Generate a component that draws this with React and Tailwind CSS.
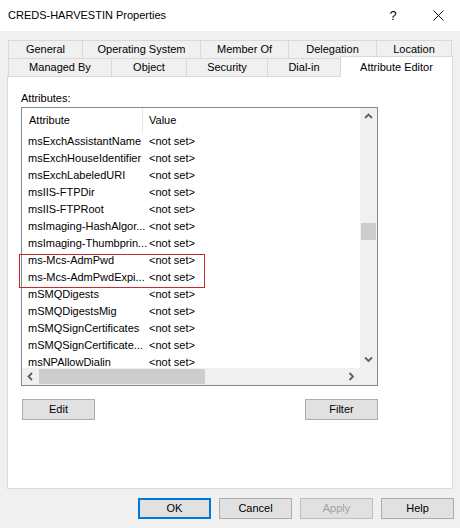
import React from 'react';

const rows = [
  'msExchAssistantName',
  'msExchHouseIdentifier',
  'msExchLabeledURI',
  'msIIS-FTPDir',
  'msIIS-FTPRoot',
  'msImaging-HashAlgor...',
  'msImaging-Thumbprin...',
  'ms-Mcs-AdmPwd',
  'ms-Mcs-AdmPwdExpi...',
  'mSMQDigests',
  'mSMQDigestsMig',
  'mSMQSignCertificates',
  'mSMQSignCertificate...',
  'msNPAllowDialin',
];

const row1 = [
  { label: 'General', w: 'w-[74px]' },
  { label: 'Operating System', w: 'w-[118px]' },
  { label: 'Member Of', w: 'w-[88px]' },
  { label: 'Delegation', w: 'w-[88px]' },
  { label: 'Location', w: 'w-[76px] border-r' },
];

const row2 = [
  { label: 'Managed By', w: 'w-[103px]' },
  { label: 'Object', w: 'w-[75px]' },
  { label: 'Security', w: 'w-[81px]' },
  { label: 'Dial-in', w: 'w-[73px]' },
];

const Chevron = ({ dir }) => {
  const paths = {
    up: 'M1 5 L4.5 1.5 L8 5',
    down: 'M1 1.5 L4.5 5 L8 1.5',
    left: 'M5 1 L1.5 4.5 L5 8',
    right: 'M1.5 1 L5 4.5 L1.5 8',
  };
  const vertical = dir === 'up' || dir === 'down';
  return (
    <svg width={vertical ? 9 : 7} height={vertical ? 7 : 9} viewBox={vertical ? '0 0 9 7' : '0 0 7 9'}>
      <path d={paths[dir]} fill="none" stroke="#606060" strokeWidth="1.8" />
    </svg>
  );
};

const Button = ({ children, className = '' }) => (
  <div className={`h-[21px] w-[73px] flex items-center justify-center border bg-[#e1e1e1] ${className}`}>
    {children}
  </div>
);

export default function App() {
  return (
    <div className="w-[460px] h-[528px] bg-[#f0f0f0] relative font-['Liberation_Sans',Arial,sans-serif] text-[11px] text-black overflow-hidden">
      {/* Title bar */}
      <div className="h-[31px] bg-white flex items-center pl-2 text-[11px]">
        <span className="flex-1">CREDS-HARVESTIN Properties</span>
        <span className="w-[20px] text-center text-[13px] mr-[25px]">?</span>
        <span className="w-[20px] flex justify-center mr-[12px]">
          <svg width="11" height="11" viewBox="0 0 11 11">
            <path d="M0.5 0.5 L10.5 10.5 M10.5 0.5 L0.5 10.5" stroke="#111" strokeWidth="1" />
          </svg>
        </span>
      </div>

      {/* Tabs */}
      <div className="mt-[9px] pl-[8px]">
        <div className="flex h-[18px]">
          {row1.map((t) => (
            <div key={t.label} className={`${t.w} border-t border-l border-[#d9d9d9] flex items-center justify-center`}>
              {t.label}
            </div>
          ))}
        </div>
        <div className="flex items-end h-[18px] relative z-10">
          {row2.map((t) => (
            <div key={t.label} className={`${t.w} h-[18px] border-t border-l border-[#d9d9d9] flex items-center justify-center`}>
              {t.label}
            </div>
          ))}
          <div className="w-[113px] h-[21px] mb-[-1px] bg-white border-t border-l border-r border-[#d9d9d9] flex justify-center pt-[2px]">
            Attribute Editor
          </div>
        </div>
      </div>

      {/* Tab panel */}
      <div className="ml-[7px] w-[446px] h-[413px] bg-white border border-[#d9d9d9] pl-[13px] pt-[13px]">
        <div className="h-[17px]">Attributes:</div>

        <div className="w-[357px] h-[279px] border border-[#828790] flex flex-col">
          <div className="flex h-[260px]">
            <div className="flex-1 overflow-hidden">
              <div className="flex h-[25px] items-center">
                <div className="w-[121px] pl-[7px] h-full flex items-center border-r border-[#e5e5e5]">Attribute</div>
                <div className="pl-[6px]">Value</div>
              </div>
              {rows.map((r) => (
                <div key={r} className="flex h-[17px] items-center whitespace-nowrap">
                  <div className="w-[121px] pl-[6px]">{r}</div>
                  <div className="pl-[6px]">&lt;not set&gt;</div>
                </div>
              ))}
            </div>
            <div className="w-[17px] bg-[#f0f0f0] flex flex-col items-center">
              <div className="h-[17px] flex items-center justify-center">
                <Chevron dir="up" />
              </div>
              <div className="h-[98px]" />
              <div className="w-[15px] h-[17px] bg-[#cdcdcd]" />
              <div className="flex-1" />
              <div className="h-[17px] flex items-center justify-center">
                <Chevron dir="down" />
              </div>
            </div>
          </div>
          <div className="flex h-[17px] bg-[#f0f0f0]">
            <div className="w-[17px] flex items-center justify-center">
              <Chevron dir="left" />
            </div>
            <div className="w-[166px] h-[15px] mt-[1px] bg-[#cdcdcd]" />
            <div className="flex-1" />
            <div className="w-[17px] flex items-center justify-center">
              <Chevron dir="right" />
            </div>
            <div className="w-[17px]" />
          </div>
        </div>

        <div className="flex mt-[13px] w-[357px] justify-between pl-[1px]">
          <Button className="border-[#adadad]">Edit</Button>
          <Button className="border-[#adadad]">Filter</Button>
        </div>
      </div>

      {/* Dialog buttons */}
      <div className="flex gap-[8px] pl-[138px] mt-[9px]">
        <Button className="border-2 border-[#0078d7]">OK</Button>
        <Button className="border-[#adadad]">Cancel</Button>
        <Button className="border-[#bfbfbf] bg-[#cccccc] text-[#a0a0a0]">Apply</Button>
        <Button className="border-[#adadad]">Help</Button>
      </div>

      {/* Red highlight annotation */}
      <div className="absolute left-[19px] top-[254px] w-[186px] h-[34px] border border-[#c8282e]" />
    </div>
  );
}
